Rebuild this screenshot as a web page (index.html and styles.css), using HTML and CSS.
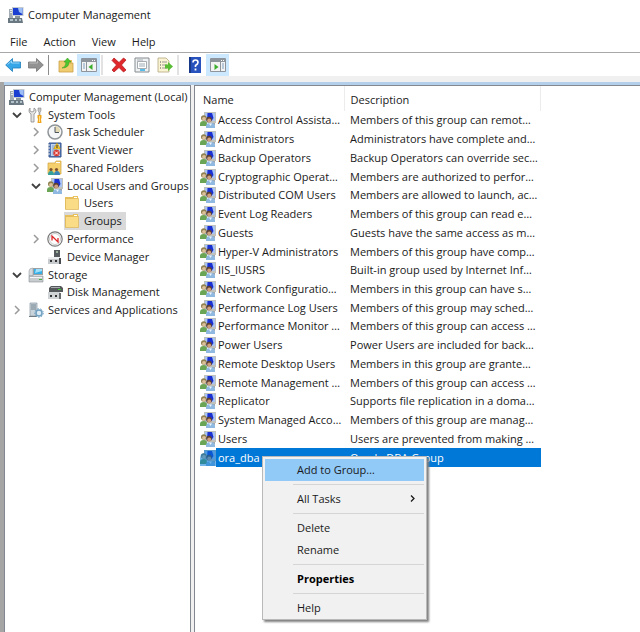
FILE: index.html
```html
<!DOCTYPE html>
<html lang="en">
<head>
    <meta charset="UTF-8">
    <meta name="viewport" content="width=device-width, initial-scale=1.0">
    <title>Computer Management</title>
    <link rel="stylesheet" href="styles.css">
</head>
<body>
    <svg class="sprite" aria-hidden="true">
        <symbol id="computer" viewBox="0 0 16 16">
            <path d="M1 2h4v10H1z" fill="#a3acb3"/>
            <path d="M2 3h2v1H2zM2 5h2v1H2z" fill="#e6ebef"/>
            <path d="M4 0h11.500v9H4z" fill="#c3cad0"/>
            <path d="M5 1h9.500v7H5z" fill="#1b3fd0"/>
            <path d="M10 1h4.500v6L11 5z" fill="#9dbdf5"/>
            <path d="M7 9h5v2H7z" fill="#8b959c"/>
            <path d="M0 11h14l1 5H0z" fill="#6a7882"/>
            <path d="M2 12h3v2H2zM7 12h2v2H7zM11 12h2v2h-2z" fill="#b4c2cc"/>
        </symbol>
        <symbol id="group" viewBox="0 0 16 16">
            <path d="M4 0h12v11H4z" fill="#c2c2bd"/>
            <path d="M5 1h10v8H5z" fill="#a9c4f3"/>
            <path d="M7.500 1H12l1.500 5-2 3H7z" fill="#1b30d0"/>
            <path d="M11 11h4v2h-4z" fill="#a3a5a6"/>
            <path d="M0 14v-2q0-3 3.500-3T7 12v2z" fill="#6aa556"/>
            <circle cx="3.800" cy="6" r="2.800" fill="#8f8050"/>
            <circle cx="4" cy="6.800" r="1.900" fill="#dcc09a"/>
            <path d="M6 16v-2q0-3 4.500-3t4.500 3v2z" fill="#8fb9e0"/>
            <path d="M9 11.500h3L10.500 14z" fill="#eef6fc"/>
            <circle cx="9" cy="7.500" r="2.800" fill="#5a4030"/>
            <circle cx="9.200" cy="8.600" r="2" fill="#cfa080"/>
        </symbol>
        <symbol id="group-selected" viewBox="0 0 16 16">
            <use href="#group" width="16" height="16"/>
            <path d="M4 0h12v16H0V8l1-4 3-1z" fill="#0078d7" opacity=".55"/>
        </symbol>
        <symbol id="tools" viewBox="0 0 16 16">
            <path d="M2 1v3l2 1 2-1V1q2 1 2 3T6 7v8H3V7Q1 6 1 4t1-3z" fill="#e4e4e4" stroke="#8a8a8a" stroke-width=".8"/>
            <path d="M10 1h3v3l-1 1v4h-1V5l-1-1z" fill="#c7c7c7" stroke="#777" stroke-width=".5"/>
            <path d="M9.500 8h4v3l-.5 1 .5 4h-4l.5-4-.5-1z" fill="#f0a51c"/>
            <path d="M11 9h1v6h-1z" fill="#ffe08a"/>
        </symbol>
        <symbol id="clock" viewBox="0 0 16 16">
            <circle cx="8" cy="8" r="7" fill="#f4f6f8" stroke="#8f9498" stroke-width="1.500"/>
            <path d="M8 2v6h5a5 5 0 0 0-5-6z" fill="#e3d9b4"/>
            <path d="M8 3v5.500h4" fill="none" stroke="#4a5560"/>
        </symbol>
        <symbol id="event" viewBox="0 0 16 16">
            <path d="M2 1h12v14H2z" fill="#5379ba" stroke="#36578f"/>
            <path d="M4 2h9v12H4z" fill="#c3d6ef"/>
            <path d="M5 4h7M5 6h5M5 8h5M5 10h5M5 12h5" stroke="#7d9fd0"/>
            <path d="M1 3h2M1 6h2M1 9h2M1 12h2" stroke="#eee"/>
            <path d="M10 1l3.500 6h-7z" fill="#f5c82a" stroke="#b78b0c" stroke-width=".5"/>
            <path d="M10 3v3" stroke="#333"/>
            <circle cx="9.500" cy="11" r="3.200" fill="#d83a34"/>
            <path d="M8 9.500l3 3M11 9.500l-3 3" stroke="#fff"/>
        </symbol>
        <symbol id="folder" viewBox="0 0 16 16">
            <path d="M1 2h8l1-1h4v13H1z" fill="#e8c05c"/>
            <path d="M1.500 3.500h13v11h-13z" fill="#f9dc85" stroke="#dcb458" stroke-width=".7"/>
            <path d="M9 1h5v3H8z" fill="#e8c05c"/>
            <path d="M10 2h3v1h-3z" fill="#fff"/>
        </symbol>
        <symbol id="shared" viewBox="0 0 16 16">
            <path d="M1 3h7l1-2h5v13H1z" fill="#f5cf6c" stroke="#d0a03a" stroke-width=".7"/>
            <path d="M9 2h4v1H9z" fill="#fff"/>
            <path d="M1 15q0-4 3-4t3 4z" fill="#33a09c"/>
            <circle cx="4" cy="9.500" r="1.600" fill="#7c5130"/>
            <path d="M7 15q0-4 3-4t3 4z" fill="#3a86b8"/>
            <circle cx="9.500" cy="9.500" r="1.600" fill="#7c5130"/>
        </symbol>
        <symbol id="performance" viewBox="0 0 16 16">
            <circle cx="8" cy="8" r="7.200" fill="#fff" stroke="#777" stroke-width="1.200"/>
            <circle cx="8" cy="8" r="5.500" fill="none" stroke="#c9c9c9"/>
            <path d="M5 9.500V5l6 6V7" fill="none" stroke="#dd2626" stroke-width="1.300"/>
        </symbol>
        <symbol id="device" viewBox="0 0 16 16">
            <path d="M7 1h6v9H7z" fill="#555a5e"/>
            <path d="M9 2h2v2H9z" fill="#9ab09a"/>
            <path d="M1 9h12l1 6H1z" fill="#c8cbce"/>
            <path d="M1 8h12v2H1z" fill="#eceeef"/>
            <path d="M3 11h2v2H3zM8 11h2v2H8z" fill="#333"/>
            <path d="M12 9h2v6h-2z" fill="#474b4e"/>
        </symbol>
        <symbol id="storage" viewBox="0 0 16 16">
            <path d="M1 4q0-3 4-3v8H1z" fill="#d6dadd" stroke="#9aa0a5" stroke-width=".6"/>
            <path d="M5 1h10v7H5z" fill="#9a9fa3"/>
            <path d="M6 2h8v5H6z" fill="#36aee6"/>
            <path d="M8 2h6v2L7 6z" fill="#a2e0fa"/>
            <path d="M1 9h14v6H1z" fill="#c8cccf" stroke="#888f94" stroke-width=".6"/>
            <path d="M2 10h12v1H2z" fill="#f6f6f6"/>
            <path d="M11 12h3v1h-3z" fill="#43b53c"/>
        </symbol>
        <symbol id="disk" viewBox="0 0 16 16">
            <path d="M4 2h10l2 2v4H2V4z" fill="#54585b"/>
            <path d="M4 3h9v1H4z" fill="#a9adb0"/>
            <path d="M11 5h3v1h-3z" fill="#3ed037"/>
            <path d="M1 8h12v7H1z" fill="#d0d3d5"/>
            <path d="M3 11h2v2H3zM8 11h2v2H8z" fill="#333"/>
            <path d="M12 9h2v6h-2z" fill="#696d70"/>
        </symbol>
        <symbol id="services" viewBox="0 0 16 16">
            <path d="M2 1h7v13H2z" fill="#c9d3da" stroke="#8796a0" stroke-width=".7"/>
            <path d="M3 3h5M3 5h5M3 7h5" stroke="#70828e"/>
            <path d="M1 14h8v1H1z" fill="#707c84"/>
            <circle cx="11" cy="11" r="3" fill="#dcecf6" stroke="#6fa0c0" stroke-width="1.500"/>
            <circle cx="11" cy="11" r="4.300" fill="none" stroke="#6fa0c0" stroke-dasharray="1.500 1.500"/>
        </symbol>
        <symbol id="back" viewBox="0 0 16 16">
            <path d="M.7 8L7.500 1.500V5h8v6h-8v3.500z" fill="#35a6e8" stroke="#1d7dbd" stroke-width=".8"/>
            <path d="M2.500 7.500L6.500 4v2h8" fill="none" stroke="#9ad6f7"/>
        </symbol>
        <symbol id="forward" viewBox="0 0 16 16">
            <path d="M15.300 8L8.500 1.500V5h-8v6h8v3.500z" fill="#929292" stroke="#757575" stroke-width=".8"/>
            <path d="M1.500 6h8V4" fill="none" stroke="#bdbdbd"/>
        </symbol>
        <symbol id="up" viewBox="0 0 16 16">
            <path d="M1 4h6l1 2h7v9H1z" fill="#f0cc70" stroke="#caa048" stroke-width=".8"/>
            <path d="M10 3h4v3h-4z" fill="#e4bb5a"/>
            <path d="M4 11q4-1 4-6H6l3.500-4L13 5h-2q0 6-7 6z" fill="#4cc52e" stroke="#2f9a1c" stroke-width=".5"/>
        </symbol>
        <symbol id="tree-pane" viewBox="0 0 16 16">
            <path d="M.5 1.500h15v13H.5z" fill="#f3f3f3" stroke="#8d949b"/>
            <path d="M1 2h14v3H1z" fill="#8d949b"/>
            <path d="M11 3h1v1h-1zM13 3h1v1h-1z" fill="#fff"/>
            <path d="M5.500 5v9" stroke="#8d949b"/>
            <path d="M2 7h2M2 9h2M2 11h2" stroke="#7c9fc2"/>
            <path d="M11.500 7v6L7.500 10z" fill="#3bae2c"/>
        </symbol>
        <symbol id="action-pane" viewBox="0 0 16 16">
            <path d="M.5 1.500h15v13H.5z" fill="#f3f3f3" stroke="#8d949b"/>
            <path d="M1 2h14v3H1z" fill="#8d949b"/>
            <path d="M11 3h1v1h-1zM13 3h1v1h-1z" fill="#fff"/>
            <path d="M10.500 5v9" stroke="#8d949b"/>
            <path d="M12 7h2M12 9h2M12 11h2" stroke="#7c9fc2"/>
            <path d="M4.500 7v6l4-3z" fill="#3bae2c"/>
        </symbol>
        <symbol id="delete" viewBox="0 0 16 16">
            <path d="M3 1l5 4.500L12.500 1 15 3l-4.500 5L15 13l-2.500 2L8 10.500 3 15l-2-2 4.500-5L1 3.500z" fill="#e0282c" stroke="#b01418" stroke-width=".7"/>
        </symbol>
        <symbol id="properties" viewBox="0 0 16 16">
            <path d="M1 1h14v14H1z" fill="#f0f1f2" stroke="#858b90"/>
            <path d="M3.500 4.500h9v7h-9z" fill="#fff" stroke="#a5acb2"/>
            <path d="M3 3h6" stroke="#a5acb2"/>
            <path d="M5 7h6M5 9h6" stroke="#9ba9b5"/>
            <path d="M6 12h5v2H6z" fill="#58bde8"/>
        </symbol>
        <symbol id="export" viewBox="0 0 16 16">
            <path d="M1 1h8l3 3v11H1z" fill="#faf3d4" stroke="#b3a67c" stroke-width=".8"/>
            <path d="M3 5h1M3 8h1M3 11h1" stroke="#555"/>
            <path d="M5 5h5M5 8h5M5 11h5" stroke="#999"/>
            <path d="M8 7.500h3V5l5 4.500-5 4.500v-2.500H8z" fill="#58bd35"/>
        </symbol>
        <symbol id="help" viewBox="0 0 16 16">
            <path d="M2 0h12v16H2z" fill="#2751bd"/>
            <path d="M2 0h2v16H2z" fill="#183988"/>
            <path d="M6 5.500q0-2.500 2.500-2.500T11 5.500Q11 7 8.500 8.500V10" fill="none" stroke="#fff" stroke-width="1.600"/>
            <path d="M7.600 11.500h1.800v2H7.600z" fill="#fff"/>
        </symbol>
        <symbol id="right" viewBox="0 0 16 16">
            <path d="M6 4l4 4-4 4" fill="none" stroke="currentColor" stroke-width="1.500"/>
        </symbol>
        <symbol id="submenu" viewBox="0 0 16 16">
            <path d="M7 4.500l3 3-3 3" fill="none" stroke="currentColor" stroke-width="1.300"/>
        </symbol>
        <symbol id="down" viewBox="0 0 16 16">
            <path d="M4 6l4 4 4-4" fill="none" stroke="currentColor" stroke-width="1.800"/>
        </symbol>
    </svg>

    <header class="titlebar">
        <svg class="icon"><use href="#computer"/></svg>
        <span>Computer Management</span>
    </header>

    <nav class="menubar">
        <button>File</button>
        <button>Action</button>
        <button>View</button>
        <button>Help</button>
    </nav>

    <div class="toolbar">
        <button aria-label="Back"><svg class="icon"><use href="#back"/></svg></button>
        <button aria-label="Forward"><svg class="icon"><use href="#forward"/></svg></button>
        <span class="divider dark"></span>
        <button aria-label="Up one level"><svg class="icon"><use href="#up"/></svg></button>
        <button class="active" aria-label="Show or hide console tree"><svg class="icon"><use href="#tree-pane"/></svg></button>
        <span class="divider"></span>
        <button aria-label="Delete"><svg class="icon"><use href="#delete"/></svg></button>
        <button aria-label="Properties"><svg class="icon"><use href="#properties"/></svg></button>
        <button aria-label="Export list"><svg class="icon"><use href="#export"/></svg></button>
        <span class="divider"></span>
        <button aria-label="Help"><svg class="icon"><use href="#help"/></svg></button>
        <button class="active" aria-label="Show or hide action pane"><svg class="icon"><use href="#action-pane"/></svg></button>
    </div>

    <main class="panes">
        <div class="sidebar">
            <ul class="tree">
                <li><svg class="icon"><use href="#computer"/></svg><span>Computer Management (Local)</span></li>
                <li class="level1"><button class="toggle open" aria-label="Collapse"><svg class="icon"><use href="#down"/></svg></button><svg class="icon"><use href="#tools"/></svg><span>System Tools</span></li>
                <li class="level2"><button class="toggle" aria-label="Expand"><svg class="icon"><use href="#right"/></svg></button><svg class="icon"><use href="#clock"/></svg><span>Task Scheduler</span></li>
                <li class="level2"><button class="toggle" aria-label="Expand"><svg class="icon"><use href="#right"/></svg></button><svg class="icon"><use href="#event"/></svg><span>Event Viewer</span></li>
                <li class="level2"><button class="toggle" aria-label="Expand"><svg class="icon"><use href="#right"/></svg></button><svg class="icon"><use href="#shared"/></svg><span>Shared Folders</span></li>
                <li class="level2"><button class="toggle open" aria-label="Collapse"><svg class="icon"><use href="#down"/></svg></button><svg class="icon"><use href="#group"/></svg><span>Local Users and Groups</span></li>
                <li class="level3"><div class="node"><svg class="icon"><use href="#folder"/></svg><span>Users</span></div></li>
                <li class="level3"><div class="node current"><svg class="icon"><use href="#folder"/></svg><span>Groups</span></div></li>
                <li class="level2"><button class="toggle" aria-label="Expand"><svg class="icon"><use href="#right"/></svg></button><svg class="icon"><use href="#performance"/></svg><span>Performance</span></li>
                <li class="level2 leaf"><svg class="icon"><use href="#device"/></svg><span>Device Manager</span></li>
                <li class="level1"><button class="toggle open" aria-label="Collapse"><svg class="icon"><use href="#down"/></svg></button><svg class="icon"><use href="#storage"/></svg><span>Storage</span></li>
                <li class="level2 leaf"><svg class="icon"><use href="#disk"/></svg><span>Disk Management</span></li>
                <li class="level1"><button class="toggle" aria-label="Expand"><svg class="icon"><use href="#right"/></svg></button><svg class="icon"><use href="#services"/></svg><span>Services and Applications</span></li>
            </ul>
        </div>

        <section class="list">
            <table>
                <colgroup>
                    <col class="icon-col">
                    <col class="name-col">
                    <col class="description-col">
                </colgroup>
                <thead>
                    <tr><th colspan="2">Name</th><th>Description</th></tr>
                </thead>
                <tbody>
                    <tr><td><svg class="icon"><use href="#group"/></svg></td><td>Access Control Assista…</td><td>Members of this group can remot…</td></tr>
                    <tr><td><svg class="icon"><use href="#group"/></svg></td><td>Administrators</td><td>Administrators have complete and…</td></tr>
                    <tr><td><svg class="icon"><use href="#group"/></svg></td><td>Backup Operators</td><td>Backup Operators can override sec…</td></tr>
                    <tr><td><svg class="icon"><use href="#group"/></svg></td><td>Cryptographic Operat…</td><td>Members are authorized to perfor…</td></tr>
                    <tr><td><svg class="icon"><use href="#group"/></svg></td><td>Distributed COM Users</td><td>Members are allowed to launch, ac…</td></tr>
                    <tr><td><svg class="icon"><use href="#group"/></svg></td><td>Event Log Readers</td><td>Members of this group can read e…</td></tr>
                    <tr><td><svg class="icon"><use href="#group"/></svg></td><td>Guests</td><td>Guests have the same access as m…</td></tr>
                    <tr><td><svg class="icon"><use href="#group"/></svg></td><td>Hyper-V Administrators</td><td>Members of this group have comp…</td></tr>
                    <tr><td><svg class="icon"><use href="#group"/></svg></td><td>IIS_IUSRS</td><td>Built-in group used by Internet Inf…</td></tr>
                    <tr><td><svg class="icon"><use href="#group"/></svg></td><td>Network Configuratio…</td><td>Members in this group can have s…</td></tr>
                    <tr><td><svg class="icon"><use href="#group"/></svg></td><td>Performance Log Users</td><td>Members of this group may sched…</td></tr>
                    <tr><td><svg class="icon"><use href="#group"/></svg></td><td>Performance Monitor …</td><td>Members of this group can access …</td></tr>
                    <tr><td><svg class="icon"><use href="#group"/></svg></td><td>Power Users</td><td>Power Users are included for back…</td></tr>
                    <tr><td><svg class="icon"><use href="#group"/></svg></td><td>Remote Desktop Users</td><td>Members in this group are grante…</td></tr>
                    <tr><td><svg class="icon"><use href="#group"/></svg></td><td>Remote Management …</td><td>Members of this group can access …</td></tr>
                    <tr><td><svg class="icon"><use href="#group"/></svg></td><td>Replicator</td><td>Supports file replication in a doma…</td></tr>
                    <tr><td><svg class="icon"><use href="#group"/></svg></td><td>System Managed Acco…</td><td>Members of this group are manag…</td></tr>
                    <tr><td><svg class="icon"><use href="#group"/></svg></td><td>Users</td><td>Users are prevented from making …</td></tr>
                    <tr class="selected"><td><svg class="icon"><use href="#group-selected"/></svg></td><td>ora_dba</td><td>Oracle DBA Group</td></tr>
                </tbody>
            </table>

            <div class="context-menu">
                <button class="hover">Add to Group…</button>
                <hr>
                <button>All Tasks<svg class="icon"><use href="#submenu"/></svg></button>
                <hr>
                <button>Delete</button>
                <button>Rename</button>
                <hr>
                <button class="default">Properties</button>
                <hr>
                <button>Help</button>
            </div>
        </section>
    </main>
</body>
</html>
```

FILE: styles.css
```css
* {
    box-sizing: border-box;
}
body {
    margin: 0;
    min-height: 100vh;
    display: flex;
    flex-direction: column;
    font-family: 'Open Sans', 'Noto Sans', sans-serif;
    font-size: 11px;
    line-height: 16px;
    color: #1a1a1a;
    background-color: #fff;
    white-space: nowrap;
}
button {
    font: inherit;
    color: inherit;
    background: none;
    border: none;
    padding: 0;
}
.sprite {
    position: absolute;
    width: 0;
    height: 0;
}
.icon {
    display: block;
    flex: none;
    width: 16px;
    height: 16px;
}

/* top bars */
.titlebar {
    display: flex;
    align-items: center;
    gap: 4px;
    height: 30px;
    padding-left: 8px;
}
.menubar {
    display: flex;
    gap: 16px;
    height: 22px;
    padding: 2px 10px 0;
}
.toolbar {
    display: flex;
    align-items: center;
    padding: 1px 0 0 1px;
    border-top: 1px solid #a8a8a8;
    border-bottom: 6px solid #f0f0f0;
}
.toolbar button {
    display: flex;
    align-items: center;
    justify-content: center;
    width: 23px;
    height: 22px;
}
.toolbar .active {
    background-color: #cce8ff;
}
.divider {
    width: 2px;
    height: 20px;
    margin: 0 4px 0 1px;
    background-color: #e2e2e2;
}
.divider.dark {
    background-color: #8c8c8c;
    border-right: 1px solid #fff;
}

/* panes */
.panes {
    flex: 1;
    display: flex;
    gap: 3px;
    padding-top: 3px;
    border-left: 4px solid #a5a5a5;
    background-color: #f0f0f0;
    box-shadow: inset 0 3px #b4cfea;
}
.sidebar {
    width: 187px;
    padding: 2px 0 0 4px;
    background-color: #fff;
    border: 1px solid #828790;
    border-bottom: none;
}
.tree {
    display: grid;
    grid-auto-rows: 1fr;
    height: 231px;
    margin: 0;
    padding: 0;
    list-style: none;
}
.tree li,
.node {
    display: flex;
    align-items: center;
    gap: 4px;
}
.level2 {
    padding-left: 19px;
}
.level3 {
    padding-left: 55px;
}
.tree .leaf {
    padding-left: 38px;
}
.toggle {
    width: 15px;
    color: #9a9a9a;
}
.toggle.open {
    color: #404040;
}
.node {
    height: 100%;
    padding-right: 4px;
}
.node.current {
    background-color: #d9d9d9;
}

/* group list */
.list {
    flex: 1;
    position: relative;
    background-color: #fff;
    border-top: 1px solid #828790;
    border-left: 1px solid #828790;
}
table {
    table-layout: fixed;
    width: 346px;
    border-collapse: collapse;
}
.icon-col {
    width: 21px;
}
.name-col {
    width: 128px;
}
th {
    height: 25px;
    padding: 2px 0 0 8px;
    font-weight: normal;
    text-align: left;
    border-right: 1px solid #ececec;
}
th + th {
    padding-left: 6px;
}
tbody {
    height: 356px;
}
td {
    padding: 0 0 0 2px;
}
td:first-child {
    padding-left: 5px;
}
td:last-child {
    padding-left: 6px;
}
.selected {
    color: #fff;
}
.selected td + td {
    background-color: #0078d7;
}

/* right click menu */
.context-menu {
    position: absolute;
    top: 370px;
    left: 67px;
    width: 165px;
    padding: 2px 2px 0;
    background-color: #f1f1f1;
    border: 1px solid #b9b9b9;
    box-shadow: 2px 2px 2px #808080;
}
.context-menu button {
    display: flex;
    align-items: center;
    justify-content: space-between;
    width: 100%;
    height: 22px;
    padding: 0 4px 0 32px;
}
.context-menu .hover {
    background-color: #91c9f7;
}
.context-menu .default {
    color: #000;
    font-weight: bold;
}
.context-menu hr {
    height: 1px;
    margin: 3px 0 3px 28px;
    border: none;
    background-color: #d5d5d5;
}
```
